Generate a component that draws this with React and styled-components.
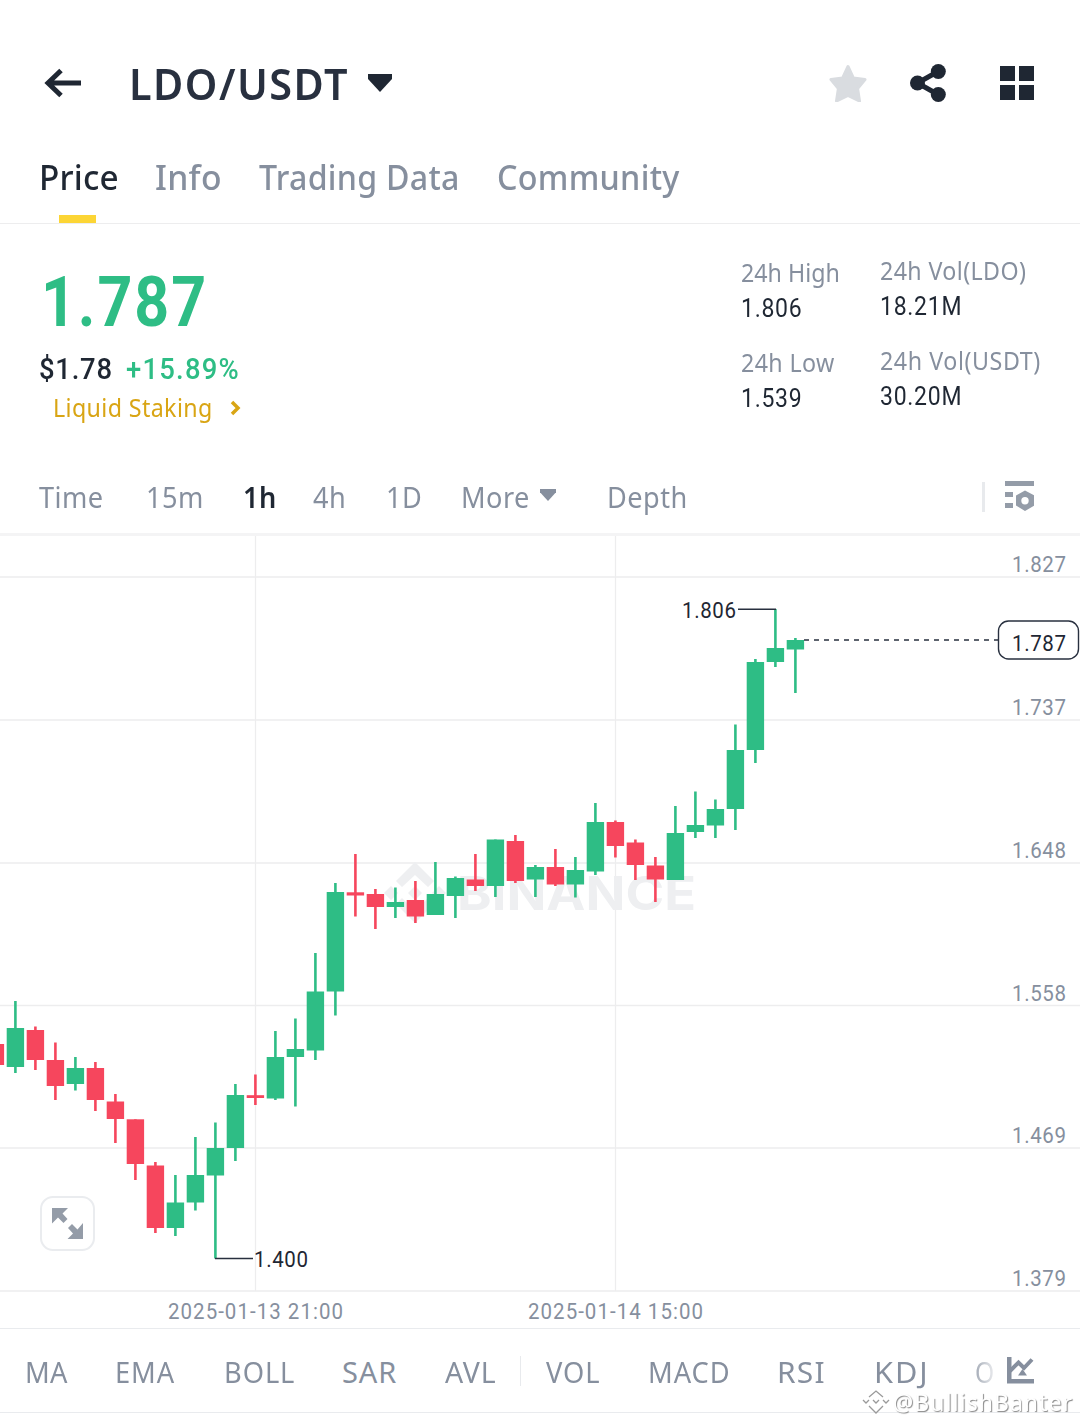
import React from 'react'
import styled, { createGlobalStyle, ThemeProvider } from 'styled-components'

const LightTheme = {
  body: '#ffffff',
  text: '#1f2733',
  muted: '#868f9e',
  line: '#ededee',
  up: '#2ebd85',
  down: '#f6465d',
  gold: '#d9a514',
  accent: '#fcd535',
  sans: "'Noto Sans', 'Open Sans', sans-serif",
  digits: "Roboto, 'Liberation Sans', sans-serif",
}

const GlobalStyle = createGlobalStyle`
*, *::before, *::after {
  box-sizing: border-box;
}
body {
  margin: 0;
  background: #ffffff;
}
`

const Screen = styled.div`
  width: 1080px;
  height: 1424px;
  overflow: hidden;
  position: relative;
  display: flex;
  flex-direction: column;
  background: ${props => props.theme.body};
  color: ${props => props.theme.text};
  font-family: ${props => props.theme.sans};
  white-space: nowrap;
`

// condensed lettering, the box keeps its width
const Narrow = styled.span`
  display: inline-block;
  letter-spacing: ${props => props.$spacing || 0}px;
  transform: scaleX(${props => props.$scale || 0.93});
  transform-origin: left center;
`

const Header = styled.header`
  height: 140px;
  padding: 26px 46px 0 44px;
  display: flex;
  align-items: center;
`

const Pair = styled.h1`
  width: 239px;
  margin: 0 0 0 47px;
  font-size: 44px;
  line-height: 60px;
  font-weight: 600;
  color: #28303f;
`

const Actions = styled.div`
  margin-left: auto;
  display: flex;
  align-items: center;
`

const Tabs = styled.nav`
  height: 84px;
  padding-left: 39px;
  display: flex;
  gap: 37px;
  border-bottom: 1px solid ${props => props.theme.line};
`

const Tab = styled.div`
  width: ${props => props.$width}px;
  height: 83px;
  padding-top: 13px;
  display: flex;
  flex-direction: column;
  justify-content: space-between;
  align-items: flex-start;
  font-size: 34px;
  line-height: 48px;
  font-weight: 500;
  color: ${props => (props.$active ? props.theme.text : props.theme.muted)};

  &::after {
    content: '';
    width: 37px;
    height: 8px;
    margin-left: 20px;
    background: ${props => (props.$active ? props.theme.accent : 'transparent')};
  }
`

const Summary = styled.section`
  height: 236px;
  padding: 33px 39px 0;
  display: flex;
  justify-content: space-between;
`

const LastPrice = styled.div`
  padding: 5px 0 0 2px;
  font-family: ${props => props.theme.digits};
  font-size: 70px;
  line-height: 80px;
  font-weight: 700;
  color: ${props => props.theme.up};
`

const Change = styled.div`
  margin-top: 6px;
  display: grid;
  grid-template-columns: 87px auto;
  font-family: ${props => props.theme.digits};
  font-size: 29.5px;
  line-height: 42px;
  font-weight: 500;
`

const Percent = styled.span`
  color: ${props => props.theme.up};
`

const Tag = styled.div`
  padding-left: 14px;
  display: grid;
  grid-template-columns: 177px auto;
  align-items: center;
  font-size: 25px;
  line-height: 35px;
  color: ${props => props.theme.gold};
`

const Stats = styled.div`
  display: flex;
`

const StatColumn = styled.div`
  width: ${props => props.$width}px;
  margin-top: ${props => props.$top}px;
  display: flex;
  flex-direction: column;
  gap: 19px;
`

const StatLabel = styled.div`
  font-size: 25px;
  line-height: 35px;
  color: ${props => props.theme.muted};
`

const StatValue = styled.div`
  margin-top: 1px;
  font-family: ${props => props.theme.digits};
  font-size: 25px;
  line-height: 35px;
`

const Periods = styled.nav`
  height: 76px;
  padding: 0 45px 0 39px;
  display: flex;
  align-items: center;
  border-bottom: 3px solid #f4f4f5;
`

const Period = styled.div`
  width: ${props => props.$width}px;
  font-size: 29.5px;
  line-height: 40px;
  font-weight: ${props => (props.$active ? 600 : 400)};
  color: ${props => (props.$active ? props.theme.text : props.theme.muted)};
`

const MoreCaret = styled.div`
  width: 67px;
  height: 16px;
  line-height: 0;
`

const Divider = styled.span`
  width: ${props => props.$size}px;
  height: 30px;
  margin-right: ${props => props.$space}px;
  background: #e8eaed;
`

const Chart = styled.svg`
  display: block;
  flex: none;
`

const Indicators = styled.nav`
  height: 85px;
  flex: none;
  padding: 1px 0 0 25px;
  display: flex;
  align-items: center;
  border-top: 1px solid #e9ebee;
  border-bottom: 1px solid #e9ebee;
  color: ${props => props.theme.muted};
`

const Indicator = styled.div`
  width: ${props => props.$width}px;
  padding-top: 2px;
  font-size: 29px;
  line-height: 40px;
`

const Faded = styled.div`
  width: 20px;
  margin-right: 11px;
  padding-top: 2px;
  font-size: 29px;
  line-height: 30px;
  color: #868f9e;
  mask-image: linear-gradient(90deg, rgba(0, 0, 0, 0.75), rgba(0, 0, 0, 0.15));
`

const Credit = styled.div`
  position: absolute;
  left: 862px;
  bottom: 9px;
  display: flex;
  align-items: center;
  gap: 3px;
  color: #ffffff;
  font-size: 23px;
  line-height: 26px;
  text-shadow: 1px 1px 1px #888888;
`

const candles = [
  // [direction, high, low, bodyTop, bodyBottom]
  ['down', 1044, 1065, 1044, 1065],
  ['up', 1001, 1073, 1028, 1067],
  ['down', 1026.5, 1070, 1030, 1060],
  ['down', 1042.5, 1100, 1060, 1086],
  ['up', 1057, 1090.5, 1068, 1084],
  ['down', 1062, 1111, 1068, 1100],
  ['down', 1094, 1143, 1101.5, 1119],
  ['down', 1119.3, 1180, 1119.3, 1164],
  ['down', 1162, 1233, 1165.5, 1228],
  ['up', 1175, 1236, 1202.5, 1228],
  ['up', 1137, 1210.5, 1175, 1202.5],
  ['up', 1122.5, 1258.5, 1148, 1175.5],
  ['up', 1084, 1161, 1095, 1148],
  ['down', 1074.5, 1105, 1095.2, 1098],
  ['up', 1031, 1100, 1057, 1098.5],
  ['up', 1018.5, 1106.5, 1049, 1057],
  ['up', 953, 1060, 991.5, 1050.5],
  ['up', 883, 1015.5, 892, 991.5],
  ['down', 854, 916.5, 892.3, 895.5],
  ['down', 889, 929, 894, 907],
  ['up', 887.5, 918, 902, 907],
  ['down', 881, 923, 900, 916.5],
  ['up', 862, 915, 894, 915],
  ['up', 876.5, 918, 878, 896],
  ['down', 854, 891, 879.5, 886],
  ['up', 839.5, 897, 839.5, 886],
  ['down', 835, 883, 841, 881],
  ['up', 865, 897, 867, 879.5],
  ['down', 849, 886, 867, 884.5],
  ['up', 857, 897.5, 870, 884.5],
  ['up', 803, 875, 822, 871.5],
  ['down', 820.5, 857.5, 822, 846],
  ['down', 839.5, 880, 842.5, 865],
  ['down', 857, 902, 865.5, 879.5],
  ['up', 806, 880, 833, 880],
  ['up', 791.5, 838, 825, 832],
  ['up', 799.5, 838, 809, 825.5],
  ['up', 724.5, 830, 750, 809],
  ['up', 659, 763, 662, 750],
  ['up', 609, 667, 648, 662],
  ['up', 638, 693, 640, 649.5],
]

const levels = [
  [577, '1.827'],
  [720, '1.737'],
  [863, '1.648'],
  [1005.5, '1.558'],
  [1148, '1.469'],
  [1291, '1.379'],
]

const BackIcon = () => (
  <svg width="38" height="34" viewBox="0 0 38 34" fill="none" stroke="#1f2733" strokeWidth="5">
    <path d="M37 17H5M17 4.500L4 17l13 12.500" />
  </svg>
)

const CaretIcon = ({ width, height, color }) => (
  <svg width={width} height={height} viewBox="0 0 24 18" preserveAspectRatio="none" fill={color}>
    <path d="M0 0H24V5L12 18L0 5Z" />
  </svg>
)

const StarIcon = () => (
  <svg width="38" height="38" viewBox="0 0 38 38" fill="#d9dce0" stroke="#d9dce0" strokeWidth="3" strokeLinejoin="round">
    <path d="M19 2.500L24.300 14L36 15.500L28.600 24.500L30.500 37L19 31.500L7.500 37L9.400 24.500L2 15.500L13.700 14Z" />
  </svg>
)

const ShareIcon = () => (
  <svg width="36" height="38" viewBox="0 0 36 38" fill="#1f2733">
    <path d="M28 7.500L7.500 19L28 30.500" fill="none" stroke="#1f2733" strokeWidth="5" />
    <circle cx="28.300" cy="7.500" r="7.500" />
    <circle cx="7.500" cy="19" r="7.500" />
    <circle cx="28.300" cy="30.500" r="7.500" />
  </svg>
)

const GridIcon = () => (
  <svg width="34" height="34" viewBox="0 0 34 34" fill="#1f2733">
    <path d="M0 0H15V15H0ZM19 0H34V15H19ZM0 19H15V34H0ZM19 19H34V34H19Z" />
  </svg>
)

const SettingsIcon = () => (
  <svg width="30" height="32" viewBox="-1 0 30 32" fill="#949ca8">
    <path d="M0 0H29V5H0ZM0 11H8V16H0ZM0 22H8V27H0Z" />
    <path fillRule="evenodd" d="M20 9.500L29.500 14.500V24.500L20 30L11 24.500V14.500ZM20 16a3.700 3.700 0 1 0 0 7.400a3.700 3.700 0 1 0 0-7.400Z" />
  </svg>
)

const IndicatorIcon = () => (
  <svg width="28" height="29" viewBox="0 1 28 29" fill="#868f9e">
    <path d="M1 1H5.500V23H28V27.500H1Z" />
    <path d="M4 15L12.500 6.500L18 12L26 3.500" fill="none" stroke="#868f9e" strokeWidth="4" />
    <path d="M16.500 13L21 19.500H12Z" />
  </svg>
)

const Candle = ({ index, candle }) => {
  const [direction, high, low, top, bottom] = candle
  const center = 15.4 + (index - 1) * 20
  return (
    <g fill={LightTheme[direction]}>
      <rect x={center - 1.3} y={high} width={2.6} height={low - high} />
      <rect x={center - 8.7} y={top} width={17.4} height={bottom - top} />
    </g>
  )
}

const ChartLabel = ({ x, y, length = 54, children }) => (
  <text transform={`translate(${x} ${y}) scale(0.91 1)`} textLength={length / 0.91}>{children}</text>
)

const CandleChart = () => (
  <Chart width="1080" height="792" viewBox="0 536 1080 792" fontFamily={LightTheme.digits} fontSize="22.500">
    <g stroke="#ededee" strokeWidth="1.300">
      {levels.map(([y]) => (
        <line key={y} x1="0" x2="1080" y1={y} y2={y} />
      ))}
      <line x1="255.500" x2="255.500" y1="536" y2="1291" />
      <line x1="615.500" x2="615.500" y1="536" y2="1291" />
    </g>
    <g fill="#eeeff1">
      <path d="M415 862L434 881L428 887L415 875L402 887L396 881Z" />
      <path d="M391 886L398 893L391 900L384 893ZM415 886L422 893L415 900L408 893ZM439 886L446 893L439 900L432 893Z" />
      <path d="M402 898L415 911L428 898L434 904L415 923L396 904Z" />
      <text x="457" y="910" fontFamily="Inter, sans-serif" fontWeight="700" fontSize="47" textLength="239" lengthAdjust="spacingAndGlyphs">BINANCE</text>
    </g>
    {candles.map((candle, index) => (
      <Candle key={index} index={index} candle={candle} />
    ))}
    <g fill={LightTheme.muted}>
      {levels.map(([y, label]) => (
        <ChartLabel key={label} x={1012} y={y - 5}>{label}</ChartLabel>
      ))}
      <ChartLabel x={168} y={1319} length={175}>2025-01-13 21:00</ChartLabel>
      <ChartLabel x={528} y={1319} length={175}>2025-01-14 15:00</ChartLabel>
    </g>
    <g fill="none" stroke="#28303f" strokeWidth="1.400">
      <path d="M738 609.300H776M215 1258.500H253" />
      <path d="M804 640H998" strokeDasharray="5 5" />
      <rect x="998.500" y="621" width="80" height="38" rx="10" fill="#ffffff" />
    </g>
    <g fill="#1f2733">
      <ChartLabel x={682} y={618}>1.806</ChartLabel>
      <ChartLabel x={254} y={1267}>1.400</ChartLabel>
      <ChartLabel x={1012} y={651}>1.787</ChartLabel>
    </g>
    <rect x="41" y="1197" width="53" height="53" rx="12" fill="#ffffff" stroke="#eaecef" strokeWidth="2" />
    <g fill="#949ca8">
      <path d="M52 1208H68L62.500 1213.500L67.500 1219L63.500 1223L58 1217.500L52 1223.500Z" />
      <path d="M83 1239H67.500L73 1233.500L68 1228L72 1224L77.500 1229.500L83 1223Z" />
    </g>
  </Chart>
)

const Stat = ({ label, value, spacing = 0.4 }) => (
  <div>
    <StatLabel><Narrow $spacing={spacing}>{label}</Narrow></StatLabel>
    <StatValue><Narrow $spacing={0.8} $scale={0.92}>{value}</Narrow></StatValue>
  </div>
)

const PeriodItem = ({ width, active, children }) => (
  <Period $width={width} $active={active}>
    <Narrow $spacing={0.5} $scale={0.92}>{children}</Narrow>
  </Period>
)

const IndicatorItem = ({ width, spacing = 1, scale = 0.94, children }) => (
  <Indicator $width={width}>
    <Narrow $spacing={spacing} $scale={scale}>{children}</Narrow>
  </Indicator>
)

const App = () => {
  return (
    <ThemeProvider theme={LightTheme}>
      <GlobalStyle />
      <Screen>
        <Header>
          <BackIcon />
          <Pair><Narrow $spacing={1.6} $scale={0.94}>LDO/USDT</Narrow></Pair>
          <CaretIcon width={24} height={18} color="#1f2733" />
          <Actions>
            <StarIcon />
            <Divider $size={0} $space={43} />
            <ShareIcon />
            <Divider $size={0} $space={54} />
            <GridIcon />
          </Actions>
        </Header>

        <Tabs>
          <Tab $active $width={79}><Narrow $spacing={0.2} $scale={0.98}>Price</Narrow></Tab>
          <Tab $width={67}><Narrow $spacing={0.3} $scale={0.99}>Info</Narrow></Tab>
          <Tab $width={201}><Narrow $spacing={0.3} $scale={0.945}>Trading Data</Narrow></Tab>
          <Tab $width={184}><Narrow $spacing={0.3} $scale={0.95}>Community</Narrow></Tab>
        </Tabs>

        <Summary>
          <div>
            <LastPrice><Narrow $spacing={2.2} $scale={0.87}>1.787</Narrow></LastPrice>
            <Change>
              <span><Narrow $spacing={0.8}>$1.78</Narrow></span>
              <Percent><Narrow $spacing={1.3}>+15.89%</Narrow></Percent>
            </Change>
            <Tag>
              <span><Narrow $spacing={0.4}>Liquid Staking</Narrow></span>
              <svg width="11" height="16" viewBox="0 0 11 16" fill="none" stroke="currentColor" strokeWidth="3.500">
                <path d="M2 2L8 8L2 14" />
              </svg>
            </Tag>
          </div>
          <Stats>
            <StatColumn $width={139} $top={-2}>
              <Stat label="24h High" value="1.806" spacing={0} />
              <Stat label="24h Low" value="1.539" />
            </StatColumn>
            <StatColumn $width={161} $top={-4}>
              <Stat label="24h Vol(LDO)" value="18.21M" />
              <Stat label="24h Vol(USDT)" value="30.20M" spacing={0.6} />
            </StatColumn>
          </Stats>
        </Summary>

        <Periods>
          <PeriodItem width={107}>Time</PeriodItem>
          <PeriodItem width={97}>15m</PeriodItem>
          <PeriodItem width={70} active>1h</PeriodItem>
          <PeriodItem width={73}>4h</PeriodItem>
          <PeriodItem width={75}>1D</PeriodItem>
          <PeriodItem width={79}>More</PeriodItem>
          <MoreCaret>
            <CaretIcon width={16} height={12} color="#868f9e" />
          </MoreCaret>
          <PeriodItem width={375}>Depth</PeriodItem>
          <Divider $size={3} $space={19} />
          <SettingsIcon />
        </Periods>

        <CandleChart />

        <Indicators>
          <IndicatorItem width={90} spacing={0.2}>MA</IndicatorItem>
          <IndicatorItem width={109}>EMA</IndicatorItem>
          <IndicatorItem width={118}>BOLL</IndicatorItem>
          <IndicatorItem width={103} spacing={0.9} scale={1}>SAR</IndicatorItem>
          <IndicatorItem width={75} spacing={0.8} scale={0.98}>AVL</IndicatorItem>
          <Divider $size={1} $space={25} />
          <IndicatorItem width={102}>VOL</IndicatorItem>
          <IndicatorItem width={129}>MACD</IndicatorItem>
          <IndicatorItem width={97} spacing={1.2} scale={1.03}>RSI</IndicatorItem>
          <IndicatorItem width={101} spacing={1.8} scale={1.06}>KDJ</IndicatorItem>
          <Faded><Narrow $scale={0.85}>O</Narrow></Faded>
          <IndicatorIcon />
        </Indicators>

        <Credit>
          <svg width="28" height="24" viewBox="0 0 28 24" fill="none" stroke="#9a9a9a" strokeWidth="1.300">
            <path d="M7 7L14 1L21 7M1 10L4 13L7 10M21 10L24 13L27 10M11 10L14 13L17 10M7 16L14 23L21 16" />
          </svg>
          <Narrow $spacing={1.3} $scale={0.98}>@BullishBanter</Narrow>
        </Credit>
      </Screen>
    </ThemeProvider>
  )
}

export default App
